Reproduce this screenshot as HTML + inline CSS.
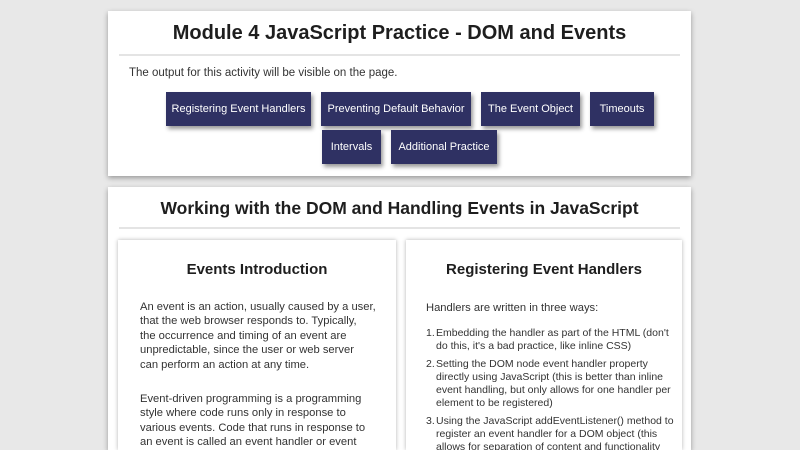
<!DOCTYPE html>
<html><head><style>
html,body{margin:0;width:800px;height:450px;overflow:hidden}
body{background:#e8e8e8;font-family:"Liberation Sans",sans-serif;color:#222;position:relative}
.card{position:absolute;background:#fff;box-shadow:0 2px 5px rgba(0,0,0,.35)}
h1{position:absolute;left:0;right:0;text-align:center;margin:0;font-weight:bold;color:#1e1e1e}
.hr{position:absolute;left:11px;right:11px;height:2px;background:#e4e4e4}
.btn{position:absolute;background:#2f3163;color:#fff;font-size:11px;line-height:34px;text-align:center;box-shadow:2px 3px 4px rgba(0,0,0,.4);white-space:nowrap}
.inner{position:absolute;background:#fff;box-shadow:0 0 4px rgba(0,0,0,.3);top:53px;height:210px}
.inner h2{font-size:15px;margin:0;position:absolute;top:21px;left:0;right:0;text-align:center;font-weight:bold;color:#1e1e1e}
p{font-size:11.2px;line-height:14.4px;color:#333;margin:0;position:absolute;white-space:nowrap}
.li{position:absolute;font-size:10.5px;line-height:13px;color:#333;white-space:nowrap}
.li b{position:absolute;left:-10px;font-weight:normal}
</style></head><body>
<div class="card" style="left:108px;top:11px;width:583px;height:165px">
<h1 style="top:11px;font-size:20px">Module 4 JavaScript Practice - DOM and Events</h1>
<div class="hr" style="top:43px"></div>
<p style="left:21px;top:55px;font-size:11.5px">The output for this activity will be visible on the page.</p>
<div class="btn" style="left:58px;top:81px;width:145px">Registering Event Handlers</div>
<div class="btn" style="left:213px;top:81px;width:150px">Preventing Default Behavior</div>
<div class="btn" style="left:373px;top:81px;width:99px">The Event Object</div>
<div class="btn" style="left:482px;top:81px;width:64px">Timeouts</div>
<div class="btn" style="left:214px;top:119px;width:59px">Intervals</div>
<div class="btn" style="left:283px;top:119px;width:106px">Additional Practice</div>
</div>
<div class="card" style="left:108px;top:187px;width:583px;height:263px">
<h1 style="top:11px;font-size:17.5px">Working with the DOM and Handling Events in JavaScript</h1>
<div class="hr" style="top:40px"></div>
<div class="inner" style="left:10px;width:278px">
<h2>Events Introduction</h2>
<p style="left:22px;top:60px">An event is an action, usually caused by a user,<br>that the web browser responds to. Typically,<br>the occurrence and timing of an event are<br>unpredictable, since the user or web server<br>can perform an action at any time.</p>
<p style="left:22px;top:152px">Event-driven programming is a programming<br>style where code runs only in response to<br>various events. Code that runs in response to<br>an event is called an event handler or event<br>listener.</p>
</div>
<div class="inner" style="left:298px;width:276px">
<h2>Registering Event Handlers</h2>
<p style="left:20px;top:61px">Handlers are written in three ways:</p>
<div class="li" style="left:30px;top:87px"><b>1.</b>Embedding the handler as part of the HTML (don't<br>do this, it's a bad practice, like inline CSS)</div>
<div class="li" style="left:30px;top:118px"><b>2.</b>Setting the DOM node event handler property<br>directly using JavaScript (this is better than inline<br>event handling, but only allows for one handler per<br>element to be registered)</div>
<div class="li" style="left:30px;top:175px"><b>3.</b>Using the JavaScript addEventListener() method to<br>register an event handler for a DOM object (this<br>allows for separation of content and functionality</div>
</div>
</div>
</body></html>
